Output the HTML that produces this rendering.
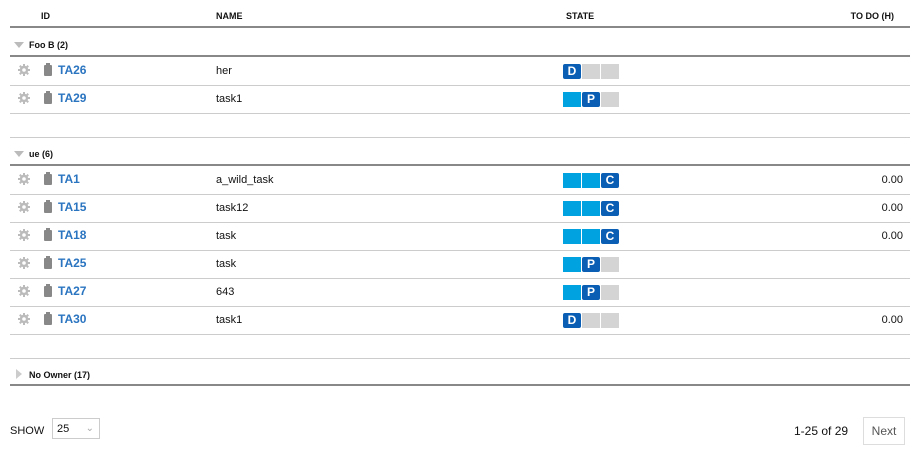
<!DOCTYPE html><html><head><style>
body{margin:0;width:914px;height:452px;background:#fff;font-family:"Liberation Sans",sans-serif;position:relative;overflow:hidden;color:#111}
.a{position:absolute}
.h{font-size:9px;font-weight:bold;top:11px}
.ln{position:absolute;left:10px;width:900px;height:1px;background:#ccc}
.tk{height:2px;background:#888}
.g{font-size:9px;font-weight:bold;left:29px}
.tri{position:absolute;left:14px;width:0;height:0;border-left:5px solid transparent;border-right:5px solid transparent;border-top:6px solid #bbb}
.id{position:absolute;left:58px;font-size:12px;font-weight:bold;color:#2a74c0}
.nm{position:absolute;left:216px;font-size:11px}
.td{position:absolute;right:11px;font-size:11px}
.st{position:absolute;left:563px;height:15px;width:56px}
.st i{position:absolute;top:0;width:18px;height:15px;background:#d4d4d4}
.st i.b{background:#00a3e0}
.st i.d{background:#0a5fb4;border-radius:2px;color:#fff;font-style:normal;font-weight:bold;font-size:12px;text-align:center;line-height:15px}
.gear{position:absolute;left:18px;width:12px;height:12px}
.clip{position:absolute;left:44px;width:8px;height:11px;background:#888;border-radius:1px}
.clip:before{content:"";position:absolute;left:2px;top:-2px;width:4px;height:3px;background:#888}
</style></head><body>
<div class="a h" style="left:41px">ID</div>
<div class="a h" style="left:216px">NAME</div>
<div class="a h" style="left:566px">STATE</div>
<div class="a h" style="right:20px">TO DO (H)</div>
<div class="ln tk" style="top:26px"></div>
<div class="tri" style="top:42px"></div><div class="a g" style="top:40px">Foo B (2)</div>
<div class="ln tk" style="top:55px"></div>
<div id="rows"></div>
<div class="ln" style="top:137px"></div>
<div class="tri" style="top:151px"></div><div class="a g" style="top:149px">ue (6)</div>
<div class="ln tk" style="top:164px"></div>
<div class="ln" style="top:358px"></div>
<div class="a" style="left:16px;top:369px;width:0;height:0;border-top:5px solid transparent;border-bottom:5px solid transparent;border-left:6px solid #ccc"></div>
<div class="a g" style="top:370px">No Owner (17)</div>
<div class="ln tk" style="top:384px"></div>
<div class="a" style="left:10px;top:425px;font-size:11px">SHOW</div>
<div class="a" style="left:52px;top:418px;width:48px;height:21px;border:1px solid #ccc;font-size:11px;line-height:21px;box-sizing:border-box;padding-left:4px">25<span style="position:absolute;right:5px;top:-1px;color:#aaa;font-size:10px">&#8964;</span></div>
<div class="a" style="left:794px;top:424px;font-size:12px">1-25 of 29</div>
<div class="a" style="left:863px;top:417px;width:42px;height:28px;border:1px solid #ddd;box-sizing:border-box;font-size:12px;line-height:26px;text-align:center;color:#555">Next</div>
<script>
var R=[[70,'TA26','her','D','',0],[98,'TA29','task1','P','',0],
[179,'TA1','a_wild_task','C','0.00',1],[207,'TA15','task12','C','0.00',1],[235,'TA18','task','C','0.00',1],[263,'TA25','task','P','',1],[291,'TA27','643','P','',1],[319,'TA30','task1','D','0.00',1]];
var h='';
R.forEach(function(r,i){var y=r[0];
h+='<svg class="gear" style="top:'+(y-6)+'px" viewBox="0 0 12 12"><g fill="#bbb"><circle cx="6" cy="6" r="4.2"/><rect x="5" y="0" width="2" height="12"/><rect x="0" y="5" width="12" height="2"/><rect x="5" y="0" width="2" height="12" transform="rotate(45 6 6)"/><rect x="5" y="0" width="2" height="12" transform="rotate(-45 6 6)"/></g><circle cx="6" cy="6" r="1.8" fill="#fff"/></svg>';
h+='<div class="clip" style="top:'+(y-5)+'px"></div>';
h+='<div class="id" style="top:'+(y-7)+'px">'+r[1]+'</div>';
h+='<div class="nm" style="top:'+(y-5)+'px">'+r[2]+'</div>';
var s=r[3],c=s=='D'?0:s=='P'?1:2,b='';
for(var k=0;k<3;k++){b+='<i class="'+(k<c?'b':k==c?'d':'')+'" style="left:'+(k*19)+'px">'+(k==c?s:'')+'</i>';}
h+='<div class="st" style="top:'+(y-6)+'px">'+b+'</div>';
if(r[4])h+='<div class="td" style="top:'+(y-5)+'px">'+r[4]+'</div>';
h+='<div class="ln" style="top:'+(y+15)+'px"></div>';
});
document.getElementById('rows').outerHTML=h;
</script>
</body></html>
